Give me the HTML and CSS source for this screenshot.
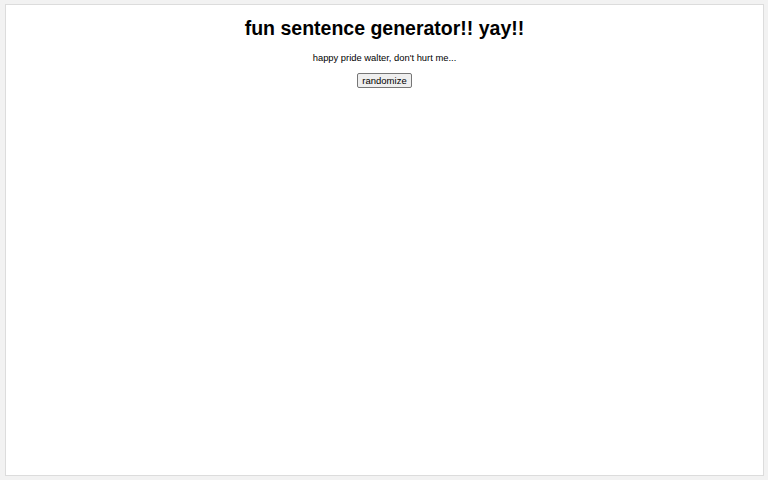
FILE: index.html
```html
<!DOCTYPE html>
<html lang="en">
<head>
  <meta charset="utf-8">
  <title>fun sentence generator</title>
  <link rel="stylesheet" href="styles.css">
</head>
<body>
  <div class="page">
    <h1>fun sentence generator!! yay!!</h1>
    <p id="sentence">happy pride walter, don't hurt me...</p>
    <button type="button" onclick="randomize()">randomize</button>
  </div>

  <script>
    var who = ["walter", "jesse", "skyler", "hank"];
    var what = ["happy pride", "good morning", "hello"];
    var end = ["don't hurt me...", "please be nice...", "yay!!"];

    function pick(list) {
      return list[Math.floor(Math.random() * list.length)];
    }

    function randomize() {
      document.getElementById("sentence").textContent =
        pick(what) + " " + pick(who) + ", " + pick(end);
    }
  </script>
</body>
</html>
```

FILE: styles.css
```css
html,
body {
  margin: 0;
  height: 100%;
}

body {
  background-color: #f2f2f2;
  padding: 4px 4px 4px 5px;
  box-sizing: border-box;
  font-family: "Liberation Sans", Arial, sans-serif;
  color: #000;
}

.page {
  height: 100%;
  box-sizing: border-box;
  background-color: #ffffff;
  border: 1px solid #dcdcdc;
  text-align: center;
  padding-top: 12px;
}

h1 {
  font-size: 19.5px;
  margin: 0 0 12px;
}

p {
  font-size: 9.4px;
  margin: 0 0 7px;
}

button {
  font-family: "Liberation Sans", Arial, sans-serif;
  font-size: 9.5px;
  padding: 1px 4px;
  background-color: #efefef;
  border: 1px solid #767676;
  border-radius: 2px;
  color: #000;
}
```
